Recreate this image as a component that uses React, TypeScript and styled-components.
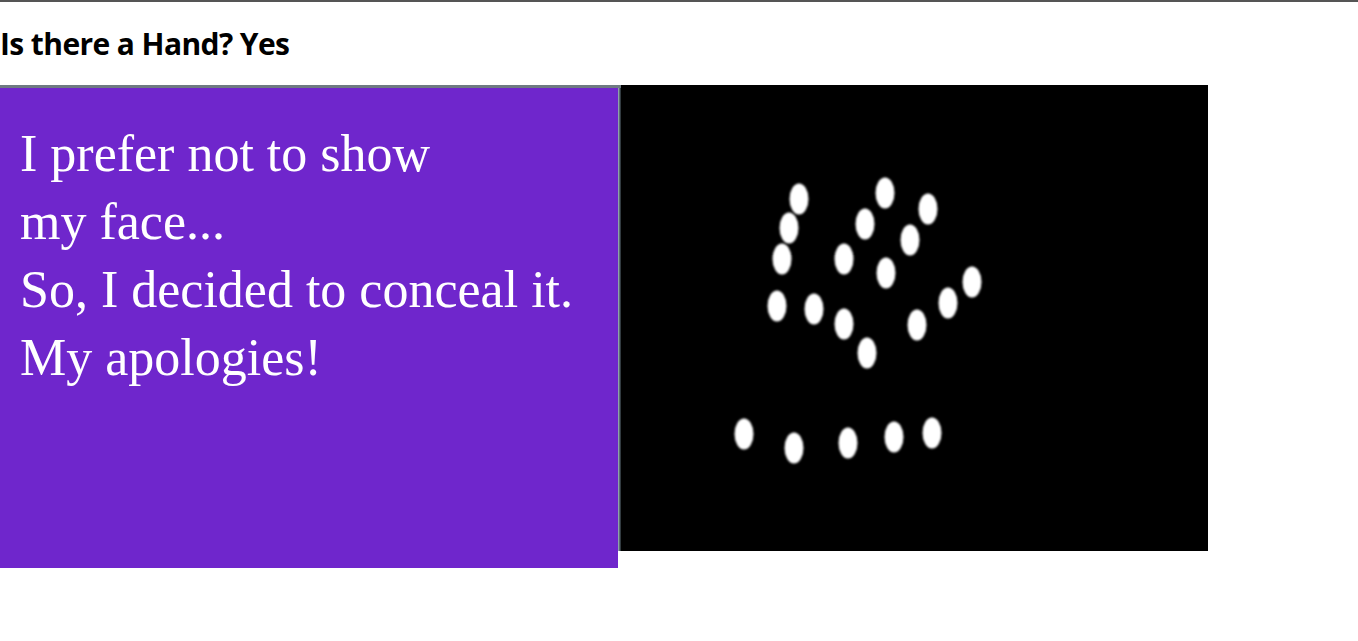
import React from "react";
import styled, { createGlobalStyle } from "styled-components";

const Global = createGlobalStyle`
  html, body { margin: 0; padding: 0; background: #ffffff; }
  body { font-family: "Open Sans", "Noto Sans", sans-serif; }
`;

const Page = styled.div`
  border-top: 2px solid #555555;
  width: 1358px;
  height: 639px;
  overflow: hidden;
`;

const Heading = styled.h1`
  margin: 0;
  padding: 24px 0 0 0;
  height: 56px;
  box-sizing: border-box;
  font-family: "Open Sans", "Noto Sans", sans-serif;
  font-weight: 700;
  font-size: 30px;
  line-height: 36px;
  letter-spacing: -0.6px;
  color: #000000;
`;

const Stage = styled.div`
  display: flex;
  margin-top: 27px;
  align-items: flex-start;
`;

const VideoFrame = styled.div`
  position: relative;
  width: 621px;
  height: 466px;
  flex: none;
  background: linear-gradient(
    to right,
    #1d2327 0%,
    #232a2e 99%,
    #a9bfca 99.5%,
    #1b2226 100%
  );
  border-top: 3px solid #6f7a82;
  box-sizing: border-box;
`;

const Overlay = styled.div`
  position: absolute;
  left: 0;
  top: 0;
  width: 618px;
  height: 480px;
  background: #6f26cc;
  box-sizing: border-box;
  padding: 32px 0 0 20px;
  color: #ffffff;
  font-family: "Liberation Serif", "Times New Roman", serif;
  font-size: 52px;
  line-height: 68px;
`;

const Canvas = styled.div`
  width: 587px;
  height: 466px;
  flex: none;
  background: #000000;
`;

const dots: [number, number][] = [
  [799, 199], [789, 228], [782, 259], [777, 306], [814, 309], [844, 324],
  [867, 353], [844, 259], [865, 224], [885, 193], [928, 209], [910, 240],
  [886, 273], [917, 325], [948, 303], [972, 282], [744, 434], [794, 448],
  [848, 443], [894, 437], [932, 433],
];

export default function App() {
  return (
    <>
      <Global />
      <Page>
        <Heading>Is there a Hand? Yes</Heading>
        <Stage>
          <VideoFrame>
            <Overlay>
              I prefer not to show
              <br />
              my face...
              <br />
              So, I decided to conceal it.
              <br />
              My apologies!
            </Overlay>
          </VideoFrame>
          <Canvas>
            <svg width="587" height="466" viewBox="0 0 587 466">
              <defs>
                <filter id="soft" x="-50%" y="-50%" width="200%" height="200%">
                  <feGaussianBlur stdDeviation="0.8" />
                </filter>
              </defs>
              {dots.map(([x, y], i) => (
                <ellipse
                  key={i}
                  cx={x - 621}
                  cy={y - 85}
                  rx={9.5}
                  ry={15.5}
                  fill="#ffffff"
                  filter="url(#soft)"
                />
              ))}
            </svg>
          </Canvas>
        </Stage>
      </Page>
    </>
  );
}
